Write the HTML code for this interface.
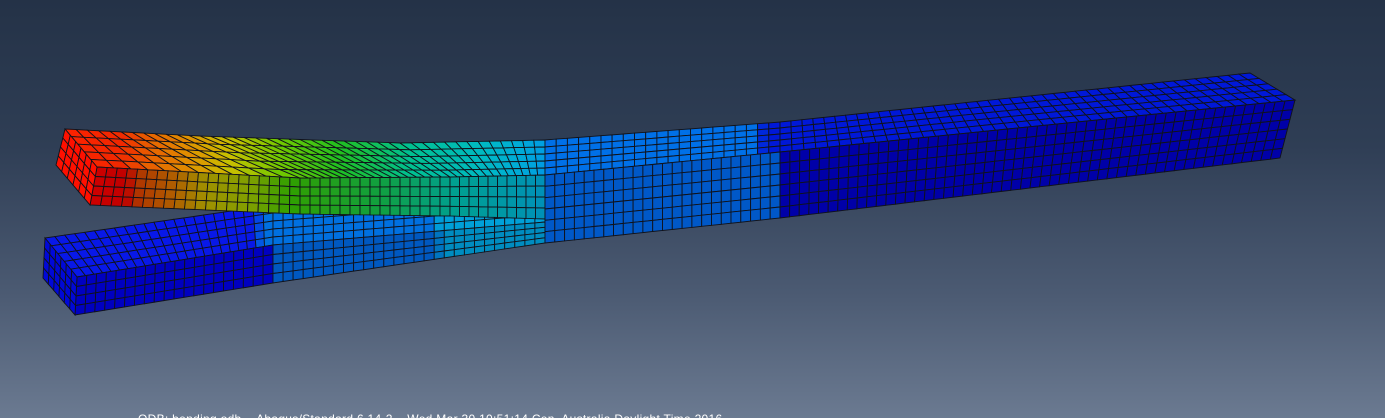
<!DOCTYPE html>
<html><head><meta charset="utf-8"><style>
html,body{margin:0;padding:0;width:1385px;height:418px;overflow:hidden}
body{background:linear-gradient(#243247,#2f3e55 35%,#4b5a72 70%,#6b7a91);font-family:"Liberation Sans",sans-serif;position:relative}
#t{position:absolute;left:138px;top:412px;color:#fff;font-size:12px;white-space:nowrap;letter-spacing:0.3px}
</style></head><body>
<svg id="s" width="1385" height="418" style="position:absolute;left:0;top:0"></svg>
<div id="t">ODB: bending.odb &nbsp;&nbsp;&nbsp;Abaqus/Standard 6.14-2 &nbsp;&nbsp;&nbsp;Wed Mar 30 10:51:14 Cen. Australia Daylight Time 2016</div>
<script>
var svg=document.getElementById('s'),out=[];
function hx(c){return [parseInt(c.substr(1,2),16),parseInt(c.substr(3,2),16),parseInt(c.substr(5,2),16)];}
function col(st,x){
 if(x<=st[0][0])return st[0][1];
 for(var i=0;i<st.length-1;i++){var a=st[i],b=st[i+1];
  if(x<=b[0]){var t=(x-a[0])/(b[0]-a[0]),A=hx(a[1]),B=hx(b[1]);
   return 'rgb('+A.map(function(v,k){return Math.round(v+(B[k]-v)*t)}).join(',')+')';}}
 return st[st.length-1][1];}
function lerp(p,q,t){return [p[0]+(q[0]-p[0])*t,p[1]+(q[1]-p[1])*t];}
function face(top,bot,cw,nv,st){
 for(var s=0;s<top.length-1;s++){
  var a=top[s],b=top[s+1],c=bot[s],d=bot[s+1];
  var L=Math.hypot(b[0]-a[0],b[1]-a[1]),nu=Math.max(1,Math.round(L/cw));
  for(var i=0;i<nu;i++)for(var j=0;j<nv;j++){
   var u0=i/nu,u1=(i+1)/nu,v0=j/nv,v1=(j+1)/nv;
   var t0=lerp(a,b,u0),t1=lerp(a,b,u1),b0=lerp(c,d,u0),b1=lerp(c,d,u1);
   var p=[lerp(t0,b0,v0),lerp(t1,b1,v0),lerp(t1,b1,v1),lerp(t0,b0,v1)];
   var cx=(p[0][0]+p[1][0]+p[2][0]+p[3][0])/4;
   out.push('<polygon points="'+p.map(function(q){return q[0].toFixed(1)+','+q[1].toFixed(1)}).join(' ')+'" fill="'+col(st,cx)+'" stroke="#10121a" stroke-width="0.9"/>');
  }}}
face([[45,238],[273,205],[545,185]],[[77,277],[273,245],[545,222]],10,5,[[40,'#0818e8'],[255,'#0818e8'],[262,'#0070e0'],[430,'#0070e0'],[440,'#00a0d8'],[545,'#00a0d8']]);
face([[77,277],[273,245],[545,222]],[[75,315],[273,283],[545,243]],10,4,[[70,'#0000c0'],[270,'#0000c0'],[276,'#0058c0'],[436,'#0058c0'],[442,'#008cc0'],[545,'#008cc0']]);
face([[45,238],[77,277]],[[43,278],[75,315]],8,4,[[0,'#0008d8'],[100,'#0008d8']]);
face([[65,129],[200,136],[400,143],[545,140],[780,122],[1250,73]],[[97,167],[300,178],[450,177],[545,175],[780,152],[1295,100]],11,5,
 [[60,'#ff2000'],[120,'#f02800'],[150,'#e86000'],[190,'#e09000'],[230,'#c8c000'],[280,'#70c800'],[340,'#20c020'],[410,'#00c090'],[490,'#00b8c8'],[540,'#00a0e0'],[550,'#0070e8'],[755,'#0070e8'],[765,'#0018d8'],[1300,'#0018d8']]);
face([[97,167],[300,178],[450,177],[545,175]],[[90,205],[300,214],[450,216],[545,219]],10,4,
 [[90,'#d00000'],[125,'#c00000'],[140,'#b03800'],[175,'#b06000'],[205,'#a09000'],[250,'#80a000'],[290,'#30a000'],[380,'#10a040'],[455,'#00a090'],[545,'#0090b8']]);
face([[545,175],[780,152],[1295,100]],[[545,243],[780,218],[1280,158]],10,6,
 [[540,'#0058c8'],[775,'#0058c8'],[782,'#0000a8'],[1300,'#0000a8']]);
face([[65,129],[97,167]],[[56,165],[90,205]],8,4,[[0,'#ff1000'],[100,'#ff1000']]);
svg.innerHTML=out.join('');
</script>
</body></html>
